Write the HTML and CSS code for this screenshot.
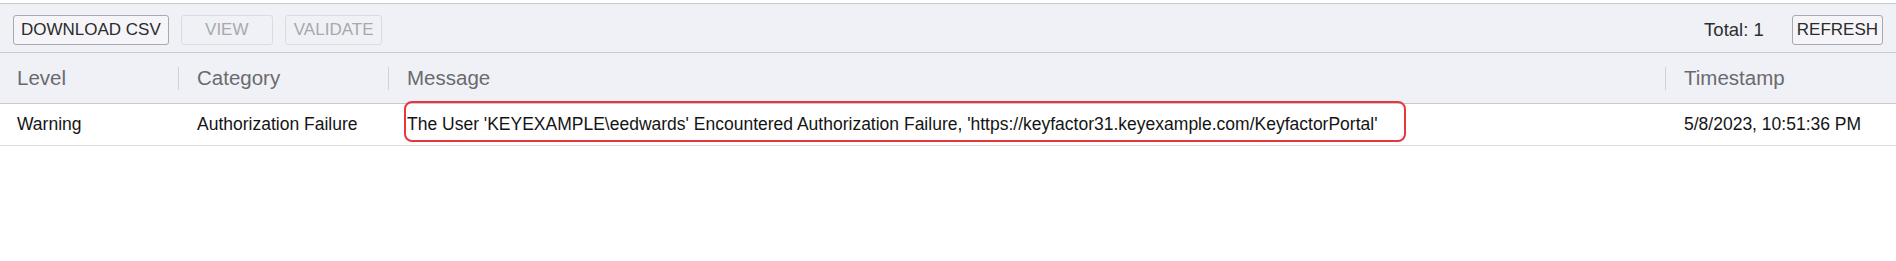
FILE: index.html
```html
<!DOCTYPE html>
<html lang="en">
<head>
<meta charset="utf-8">
<title>Audit Log</title>
<link rel="stylesheet" href="styles.css">
</head>
<body>
<div class="page">
  <div class="toolbar">
    <div class="actions">
      <button class="btn">DOWNLOAD CSV</button>
      <button class="btn btn-disabled btn-view">VIEW</button>
      <button class="btn btn-disabled">VALIDATE</button>
    </div>
    <div class="summary">
      <span class="total">Total: 1</span>
      <button class="btn btn-refresh">REFRESH</button>
    </div>
  </div>
  <div class="grid">
    <div class="row head">
      <div class="th first">Level</div>
      <div class="th"><span class="sep"></span>Category</div>
      <div class="th"><span class="sep"></span>Message</div>
      <div class="th"><span class="sep"></span>Timestamp</div>
    </div>
    <div class="row body">
      <div class="td first">Warning</div>
      <div class="td">Authorization Failure</div>
      <div class="td msg">The User 'KEYEXAMPLE\eedwards' Encountered Authorization Failure, 'https://keyfactor31.keyexample.com/KeyfactorPortal'<span class="highlight"></span></div>
      <div class="td">5/8/2023, 10:51:36 PM</div>
    </div>
  </div>
</div>
</body>
</html>
```
FILE: styles.css
```css
* { box-sizing: border-box; }
html, body { margin: 0; background: #ffffff; }
body {
  font-family: "Liberation Sans", Arial, sans-serif;
  color: #141414;
}
.page { padding-top: 3px; }
.toolbar {
  display: flex;
  justify-content: space-between;
  align-items: flex-start;
  background: #f0f1f6;
  border-top: 1px solid #c9c9ce;
  border-bottom: 1px solid #c9c9ce;
  padding: 11px 13px 7px 13px;
  height: 50px;
}
.actions, .summary {
  display: flex;
  align-items: center;
}
.actions { gap: 12px; }
.summary { gap: 28px; }
.btn {
  font-family: inherit;
  font-size: 17px;
  height: 30px;
  padding: 0 7px;
  border: 1px solid #a9a9ae;
  border-radius: 3px;
  background: #f5f5f9;
  color: #2b2b2b;
  line-height: 28px;
}
.btn-disabled {
  border-color: #dcdce0;
  color: #a8a8ac;
  background: #f0f1f6;
  padding: 0 8px;
}
.btn-view { min-width: 92px; }
.btn-refresh { padding: 0 4px; }
.total { font-size: 18.5px; color: #2e2e2e; }
.row {
  display: grid;
  grid-template-columns: 178px 210px 1fr 231px;
}
.head {
  background: #f0f1f6;
  height: 51px;
  border-bottom: 1px solid #c9c9ce;
}
.th {
  display: flex;
  align-items: center;
  gap: 18px;
  font-size: 20.5px;
  color: #6a6a6e;
}
.th.first { padding-left: 17px; }
.sep {
  width: 1px;
  height: 23px;
  background: #d2d2d6;
}
.body {
  height: 42px;
  border-bottom: 1px solid #dedee2;
}
.td {
  display: flex;
  align-items: center;
  padding-left: 19px;
  font-size: 17.5px;
  white-space: nowrap;
}
.td.first { padding-left: 17px; }
.msg { position: relative; }
.highlight {
  position: absolute;
  left: 16px;
  top: -3px;
  width: 1002px;
  height: 41px;
  border: 2px solid #e8363d;
  border-radius: 8px;
}
```
